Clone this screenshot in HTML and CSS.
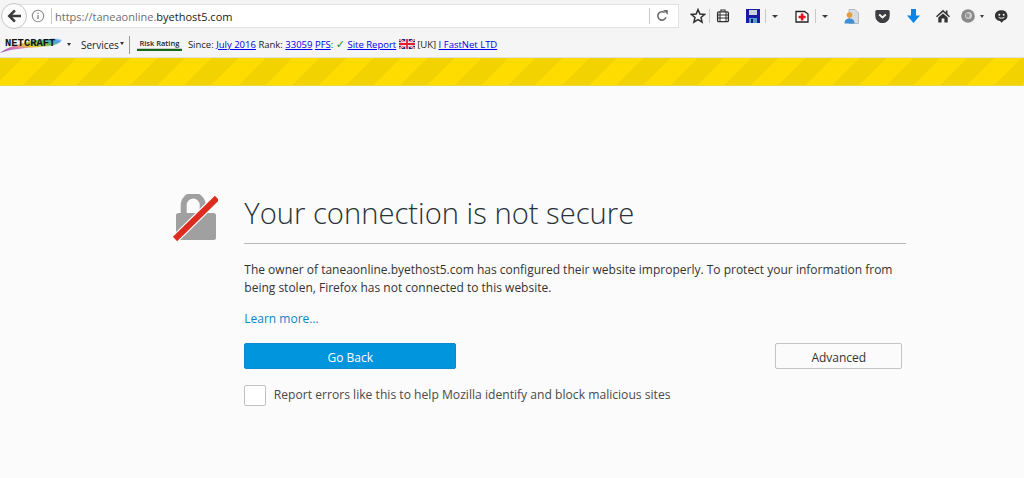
FILE: index.html
```html
<!DOCTYPE html>
<html lang="en">
<head>
<meta charset="utf-8">
<title>Insecure Connection</title>
<link rel="stylesheet" href="styles.css">
</head>
<body>
<header class="nav">
  <div class="back"><svg width="16" height="16" viewBox="0 0 16 16"><path d="M8 1.500 1.500 8 8 14.500l1.800-1.800L6.400 9.300H15V6.700H6.400l3.400-3.400z" fill="#3a3a3a"/></svg></div>
  <div class="url">
    <svg class="info" width="14" height="14" viewBox="0 0 14 14"><circle cx="7" cy="7" r="5.700" fill="none" stroke="#8f8f8f" stroke-width="1.100"/><rect x="6.400" y="6" width="1.300" height="4" fill="#808080"/><rect x="6.400" y="3.700" width="1.300" height="1.300" fill="#808080"/></svg>
    <span class="sep url-sep"></span>
    <span class="addr"><span class="dim">https://taneaonline.</span>byethost5.com</span>
    <span class="sep reload-sep"></span>
    <svg class="reload" width="14" height="14" viewBox="0 0 14 14"><path d="M11 8.300A4.200 4.200 0 1 1 9.600 3.600" fill="none" stroke="#6b6b6b" stroke-width="1.600"/><path d="M8 1h4.800v4.800z" fill="#6b6b6b"/></svg>
  </div>
  <div class="tools">
    <svg class="t-star" width="16" height="16" viewBox="0 0 16 16"><path d="M8 1.600 9.900 6l4.700.4-3.600 3.100 1.100 4.700L8 11.700l-4.100 2.500L5 9.500 1.400 6.400 6.100 6z" fill="none" stroke="#2f2f2f" stroke-width="1.500"/></svg>
    <span class="sep t-sep1"></span>
    <svg class="t-clip" width="14" height="14" viewBox="0 0 14 14"><path d="M5 2.500V1h4v1.500" fill="none" stroke="#333" stroke-width="1.200"/><rect x="1.600" y="2.800" width="10.800" height="9.800" rx="1.200" fill="#fff" stroke="#2d2d2d" stroke-width="1.300"/><path d="M1.600 6h10.800M1.600 9h10.800M4 3v9.500M10 3v9.500" stroke="#2d2d2d"/></svg>
    <svg class="t-save" width="14" height="14" viewBox="0 0 14 14"><rect width="14" height="14" fill="#1a1aa6"/><rect x="3" y="1" width="8" height="5" fill="#c9d2ea"/><rect x="3" y="9" width="8" height="5" fill="#4fa0c8"/><rect x="5" y="10" width="2" height="4" fill="#12127c"/></svg>
    <span class="sep t-sep2"></span>
    <span class="caret c1"></span>
    <svg class="t-aid" width="14" height="14" viewBox="0 0 14 14"><path d="M1 2.500h8.500L13 5v8H1z" fill="#fff" stroke="#222" stroke-width="1.300"/><path d="M5.800 4.500h2.600v2.200h2.200v2.600H8.400v2.200H5.800V9.300H3.600V6.700h2.200z" fill="#e8101c"/></svg>
    <span class="sep t-sep3"></span>
    <span class="caret c2"></span>
    <svg class="t-user" width="15" height="15" viewBox="0 0 15 15"><path d="M5 .5h6l3.500 3.500v10.500H5z" fill="#d8dbe0" stroke="#a9adb3" stroke-width=".8"/><circle cx="5.500" cy="6" r="2.800" fill="#e89b3c"/><path d="M.5 14.500c0-3.600 2-5 5-5s5 1.400 5 5z" fill="#3f8fd8"/></svg>
    <svg class="t-pocket" width="15" height="13" viewBox="0 0 15 13"><path d="M1.800 0h11.400A1.500 1.500 0 0 1 14.700 1.500V6A7.200 7.200 0 0 1 .3 6V1.500A1.500 1.500 0 0 1 1.800 0z" fill="#3e3e42"/><path d="M4.200 4.500 7.500 7.500l3.300-3" fill="none" stroke="#f5f5f5" stroke-width="1.900"/></svg>
    <svg class="t-down" width="13" height="14" viewBox="0 0 13 14"><path d="M4 0h5v6.500h4L6.500 14 0 6.500h4z" fill="#0a84e6"/></svg>
    <svg class="t-home" width="14" height="14" viewBox="0 0 14 14"><path d="M7 .8 0 7.300l1 1L7 3l6 5.300 1-1L11.500 5V1.500H9.800v2z" fill="#333"/><path d="M2.300 8.500 7 4.400l4.700 4.100V13.500H8.400V9.500H5.600v4H2.300z" fill="#333"/></svg>
    <svg class="t-globe" width="14" height="14" viewBox="0 0 14 14"><circle cx="7" cy="7" r="6.800" fill="#8a8a8a"/><circle cx="7.500" cy="6.500" r="3.500" fill="#cfcfcf"/><path d="M5 4l4 1-1 4-3-1z" fill="#9a9a9a"/></svg>
    <span class="caret small c3"></span>
    <svg class="t-smile" width="13" height="13" viewBox="0 0 13 13"><path d="M6.500.3a5.800 5.300 0 0 1 2.300 10.200L6.500 12.700 5 11A5.800 5.300 0 0 1 6.500.3z" fill="#333"/><circle cx="4.300" cy="4.800" r="1" fill="#f5f5f5"/><circle cx="8.700" cy="4.800" r="1" fill="#f5f5f5"/><path d="M3.600 7.300c1.500 1.200 4.300 1.200 5.800 0" fill="none" stroke="#f5f5f5"/></svg>
  </div>
</header>
<div class="netcraft">
  <span class="logo"><svg class="swoosh" width="62" height="16" viewBox="0 0 62 16"><defs><linearGradient id="rb" x1="0" y1="1" x2="1" y2="0"><stop offset="0" stop-color="#8a4fc0"/><stop offset=".3" stop-color="#d07ab0"/><stop offset=".5" stop-color="#e8c840"/><stop offset=".7" stop-color="#60c060"/><stop offset=".88" stop-color="#4aa0f0"/><stop offset="1" stop-color="#e8f0ff"/></linearGradient></defs><path d="M0 15C8 8 30 2 50 1c6-1 11 0 12 1-3 5-12 6-22 7C25 10 10 11 0 15z" fill="url(#rb)"/></svg><span class="logo-text">NETCRAFT</span></span>
  <span class="caret tiny drop1"></span>
  <span class="services">Services</span><span class="caret tiny drop2"></span>
  <span class="nc-sep"></span>
  <span class="risk"><span class="risk-label">Risk Rating</span><span class="risk-bar"></span></span>
  <span class="facts">Since: <a href="#">July 2016</a> Rank: <a href="#">33059</a> <a href="#">PFS</a>: <span class="tick">✓</span> <a href="#">Site Report</a> <svg class="flag" width="16" height="10" viewBox="0 0 16 10"><rect width="16" height="10" fill="#23237a"/><path d="M0 0l16 10M16 0 0 10" stroke="#fff" stroke-width="2"/><path d="M0 0l16 10M16 0 0 10" stroke="#e0202c" stroke-width=".8"/><path d="M8 0v10M0 5h16" stroke="#fff" stroke-width="3.400"/><path d="M8 0v10M0 5h16" stroke="#e0202c" stroke-width="1.800"/></svg> [UK] <a href="#">I FastNet LTD</a></span>
</div>
<div class="stripes"></div>
<main class="page">
  <svg class="lock" width="46" height="50" viewBox="0 0 46 50"><path d="M11.700 21V11a9.500 9.500 0 0 1 19 0v10" fill="none" stroke="#a0a0a0" stroke-width="6"/><rect x="4" y="19" width="40" height="27" rx="2.500" fill="#a0a0a0"/><path d="M1 47 47 2" stroke="#fbfbfb" stroke-width="8.500"/><path d="M3 45 45 4" stroke="#dd2c1f" stroke-width="6"/></svg>
  <section class="content">
    <h1>Your connection is not secure</h1>
    <p class="desc">The owner of taneaonline.byethost5.com has configured their website improperly. To protect your information from being stolen, Firefox has not connected to this website.</p>
    <a class="learn" href="#">Learn more…</a>
    <div class="actions">
      <button class="primary">Go Back</button>
      <button class="secondary">Advanced</button>
    </div>
    <label class="report"><span class="box"></span><span class="report-text">Report errors like this to help Mozilla identify and block malicious sites</span></label>
  </section>
</main>
</body>
</html>
```
FILE: styles.css
```css
* { box-sizing: border-box; }
html, body { margin: 0; height: 478px; overflow: hidden; }
body { background: #fbfbfb; font-family: "Open Sans", "Liberation Sans", sans-serif; color: #333; }
.nav { height: 36px; background: #f5f5f5; display: flex; align-items: flex-start; position: relative; }
.back { width: 26px; height: 26px; margin: 3px 0 0 1px; border: 1px solid #c6c6c6; border-radius: 50%; background: #fbfbfb; display: flex; align-items: center; justify-content: center; z-index: 1; }
.url { width: 665px; height: 24px; margin: 4px 0 0 -13px; padding-left: 15px; background: #fff; border: 1px solid #e2e2e2; display: flex; align-items: center; flex: none; }
.info { margin-left: 1px; flex: none; }
.sep { width: 1px; height: 16px; background: #c9c9c9; flex: none; }
.url-sep { margin-left: 6px; }
.addr { margin-left: 3px; font-size: 11px; color: #1a1a1a; flex: 1; white-space: nowrap; }
.dim { color: #6f6f6f; }
.reload { margin: 0 9px 0 5px; }
.tools { display: flex; align-items: center; height: 24px; margin-top: 4px; flex: 1; padding-left: 10.500px; }
.t-sep1 { height: 14px; margin: 0 0 0 3px; }
.t-clip { margin-left: 6px; }
.t-save { margin-left: 16px; }
.t-sep2 { height: 14px; margin-left: 5px; }
.caret { width: 0; height: 0; border-left: 3.500px solid transparent; border-right: 3.500px solid transparent; border-top: 3.500px solid #3c3c3c; flex: none; }
.c1 { margin-left: 6px; }
.t-aid { margin-left: 17px; }
.t-sep3 { height: 14px; margin-left: 6px; }
.c2 { margin-left: 6px; }
.t-user { margin-left: 16px; }
.t-pocket { margin-left: 16px; }
.t-down { margin-left: 17px; }
.t-home { margin-left: 16.500px; }
.t-globe { margin-left: 11px; }
.caret.small { border-width: 3px 2.500px 0; }
.c3 { margin-left: 5px; }
.t-smile { margin-left: 11px; }
.netcraft { height: 22px; padding-bottom: 4px; background: #f5f5f5; display: flex; align-items: center; font-size: 10px; color: #222; white-space: nowrap; border-bottom: 1px solid #e0e0e0; }
.logo { position: relative; width: 62px; height: 16px; flex: none; }
.swoosh { position: absolute; left: 0; top: 1px; }
.logo-text { position: absolute; left: 5px; top: 0; font: bold 10.500px/13px "Liberation Mono", monospace; color: #111; }
.caret.tiny { border-width: 3px 2.500px 0; border-top-color: #333; }
.drop1 { margin-left: 5px; }
.services { margin-left: 10px; }
.drop2 { margin-left: 1px; margin-bottom: 2px; }
.nc-sep { width: 1px; height: 18px; background: #999; margin-left: 5px; }
.risk { width: 45px; margin-left: 7px; display: flex; flex-direction: column; align-items: center; flex: none; }
.risk-label { font-size: 7.500px; line-height: 8px; font-weight: 600; }
.risk-bar { width: 45px; height: 3px; background: #14691e; border: 1px solid #ccc; border-width: 1px 0 0; margin-top: 1px; }
.facts { margin-left: 6px; font-size: 9.500px; }
.facts a { color: #0000ee; text-decoration: underline; }
.tick { color: #1d8a2c; font-family: "DejaVu Sans", sans-serif; font-size: 11px; font-weight: bold; }
.flag { vertical-align: -1px; }
.stripes { height: 28px; border-bottom: 1px solid #eddb3c; background: repeating-linear-gradient(-45deg, #ffdc00 0 1.500px, #f2d200 1.500px 20.590px, #ffdc00 20.590px 38.180px); }
.page { display: flex; align-items: flex-start; padding: 106px 0 0 172px; }
.lock { flex: none; margin-top: 2px; }
.content { width: 661.500px; margin-left: 26.300px; }
h1 { margin: 0; font-size: 29.200px; line-height: 42px; font-weight: 300; color: #27313a; padding-bottom: 9px; border-bottom: 1px solid #b8b8b8; white-space: nowrap; }
.desc { margin: 17px 0 0; font-size: 12px; line-height: 18px; color: #333; width: 655px; }
.learn { display: block; margin-top: 13px; font-size: 12px; line-height: 18px; color: #0a84c8; text-decoration: none; }
.actions { display: flex; justify-content: space-between; margin-top: 15px; padding-right: 3.500px; }
button { font-family: inherit; font-size: 12px; height: 26px; border-radius: 2px; padding: 3px 0 0; }
.primary { width: 212px; background: #0095dd; border: 1px solid #0a8bd0; color: #fff; }
.secondary { width: 127px; background: #fbfbfb; border: 1px solid #c4c4c4; color: #333; }
.report { display: flex; align-items: center; gap: 8px; margin-top: 16px; font-size: 12.130px; line-height: 21px; color: #4a4a4a; }
.report-text { margin-top: -2px; }
.box { width: 21.500px; height: 21px; background: #fff; border: 1px solid #c1c1c1; border-radius: 2px; flex: none; }
```
